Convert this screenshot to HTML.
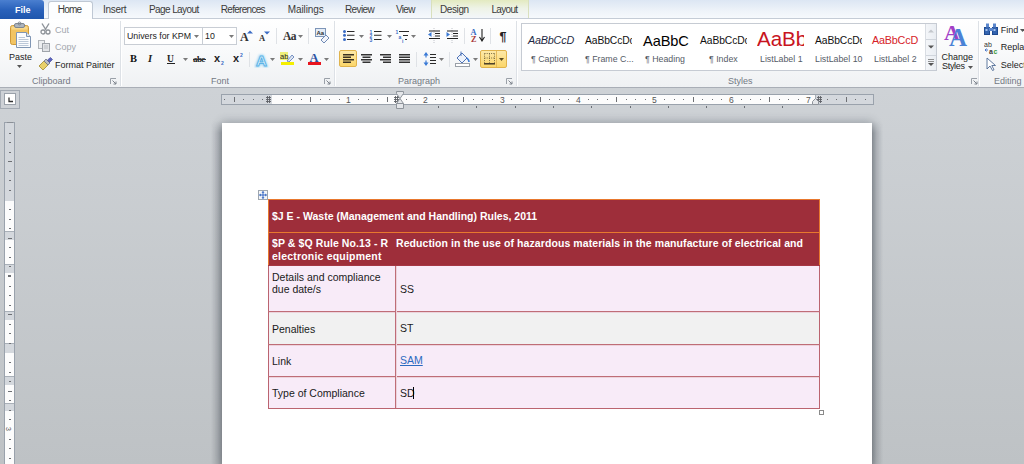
<!DOCTYPE html>
<html><head><meta charset="utf-8"><style>
*{box-sizing:border-box}
html,body{margin:0;padding:0}
body{width:1024px;height:464px;overflow:hidden;position:relative;background:linear-gradient(#ced2d6 0px,#ced2d6 88px,#bec2c5 464px);font-family:"Liberation Sans",sans-serif;color:#222}
.a{position:absolute}
.t{position:absolute;white-space:nowrap}
</style></head><body>
<div class="a" style="left:0px;top:0px;width:1024px;height:19px;background:linear-gradient(#dce6f3,#eef3f9 60%,#f6f9fc);border-bottom:1px solid #c5ccd6"></div>
<div class="a" style="left:431px;top:0px;width:98px;height:18px;background:linear-gradient(#e3eac0,#eef3e6 45%,#f3f6fa);border-left:1px solid #d9e0bd;border-right:1px solid #d9e0bd"></div>
<div class="a" style="left:0px;top:0px;width:44px;height:19px;background:linear-gradient(#4a7fd0,#2a62bb 50%,#1f56ad);border-radius:0 3px 0 0"></div>
<div class="t" style="left:15px;top:5.78px;font-size:9px;line-height:9px;color:#fff;font-weight:bold;font-style:normal;font-family:'Liberation Sans',sans-serif;">File</div>
<div class="a" style="left:48px;top:1px;width:45px;height:19px;background:#fdfeff;border:1px solid #bfc8d4;border-bottom:none;border-radius:3px 3px 0 0"></div>
<div class="t" style="left:57.75px;top:4.94px;font-size:10px;line-height:10px;color:#3b3b3b;font-weight:normal;font-style:normal;font-family:'Liberation Sans',sans-serif;letter-spacing:-0.8px">Home</div>
<div class="t" style="left:103px;top:4.94px;font-size:10px;line-height:10px;color:#3b3b3b;font-weight:normal;font-style:normal;font-family:'Liberation Sans',sans-serif;letter-spacing:-0.3px">Insert</div>
<div class="t" style="left:149px;top:4.94px;font-size:10px;line-height:10px;color:#3b3b3b;font-weight:normal;font-style:normal;font-family:'Liberation Sans',sans-serif;letter-spacing:-0.6px">Page Layout</div>
<div class="t" style="left:220.75px;top:4.94px;font-size:10px;line-height:10px;color:#3b3b3b;font-weight:normal;font-style:normal;font-family:'Liberation Sans',sans-serif;letter-spacing:-0.7px">References</div>
<div class="t" style="left:287.75px;top:4.94px;font-size:10px;line-height:10px;color:#3b3b3b;font-weight:normal;font-style:normal;font-family:'Liberation Sans',sans-serif;letter-spacing:-0.1px">Mailings</div>
<div class="t" style="left:345px;top:4.94px;font-size:10px;line-height:10px;color:#3b3b3b;font-weight:normal;font-style:normal;font-family:'Liberation Sans',sans-serif;letter-spacing:-0.6px">Review</div>
<div class="t" style="left:396px;top:4.94px;font-size:10px;line-height:10px;color:#3b3b3b;font-weight:normal;font-style:normal;font-family:'Liberation Sans',sans-serif;letter-spacing:-0.7px">View</div>
<div class="t" style="left:440px;top:4.94px;font-size:10px;line-height:10px;color:#3b3b3b;font-weight:normal;font-style:normal;font-family:'Liberation Sans',sans-serif;letter-spacing:-0.4px">Design</div>
<div class="t" style="left:491.5px;top:4.94px;font-size:10px;line-height:10px;color:#3b3b3b;font-weight:normal;font-style:normal;font-family:'Liberation Sans',sans-serif;letter-spacing:-0.7px">Layout</div>
<div class="a" style="left:0px;top:19px;width:1024px;height:69px;background:linear-gradient(#ffffff,#f9fafb 45%,#eff1f3);border-bottom:1px solid #a9aeb6"></div>
<div class="a" style="left:120px;top:21px;width:1px;height:65px;background:#dde1e6"></div>
<div class="a" style="left:121px;top:21px;width:1px;height:65px;background:#ffffff"></div>
<div class="a" style="left:334px;top:21px;width:1px;height:65px;background:#dde1e6"></div>
<div class="a" style="left:335px;top:21px;width:1px;height:65px;background:#ffffff"></div>
<div class="a" style="left:516px;top:21px;width:1px;height:65px;background:#dde1e6"></div>
<div class="a" style="left:517px;top:21px;width:1px;height:65px;background:#ffffff"></div>
<div class="a" style="left:978px;top:21px;width:1px;height:65px;background:#dde1e6"></div>
<div class="a" style="left:979px;top:21px;width:1px;height:65px;background:#ffffff"></div>
<div class="t" style="left:32px;top:76.98px;font-size:9px;line-height:9px;color:#737983;font-weight:normal;font-style:normal;font-family:'Liberation Sans',sans-serif;">Clipboard</div>
<div class="t" style="left:211px;top:76.98px;font-size:9px;line-height:9px;color:#737983;font-weight:normal;font-style:normal;font-family:'Liberation Sans',sans-serif;">Font</div>
<div class="t" style="left:398px;top:76.98px;font-size:9px;line-height:9px;color:#737983;font-weight:normal;font-style:normal;font-family:'Liberation Sans',sans-serif;">Paragraph</div>
<div class="t" style="left:728px;top:76.98px;font-size:9px;line-height:9px;color:#737983;font-weight:normal;font-style:normal;font-family:'Liberation Sans',sans-serif;">Styles</div>
<div class="t" style="left:994px;top:76.98px;font-size:9px;line-height:9px;color:#737983;font-weight:normal;font-style:normal;font-family:'Liberation Sans',sans-serif;">Editing</div>
<svg class="a" style="left:110px;top:78px" width="7" height="7" viewBox="0 0 7 7"><path d="M0.5 6V0.5H6" stroke="#9aa0a8" fill="none"/><path d="M2.5 2.5L6 6M6 3.5V6H3.5" stroke="#7d838c" fill="none"/></svg>
<svg class="a" style="left:324px;top:78px" width="7" height="7" viewBox="0 0 7 7"><path d="M0.5 6V0.5H6" stroke="#9aa0a8" fill="none"/><path d="M2.5 2.5L6 6M6 3.5V6H3.5" stroke="#7d838c" fill="none"/></svg>
<svg class="a" style="left:506px;top:78px" width="7" height="7" viewBox="0 0 7 7"><path d="M0.5 6V0.5H6" stroke="#9aa0a8" fill="none"/><path d="M2.5 2.5L6 6M6 3.5V6H3.5" stroke="#7d838c" fill="none"/></svg>
<svg class="a" style="left:971px;top:78px" width="7" height="7" viewBox="0 0 7 7"><path d="M0.5 6V0.5H6" stroke="#9aa0a8" fill="none"/><path d="M2.5 2.5L6 6M6 3.5V6H3.5" stroke="#7d838c" fill="none"/></svg>
<svg class="a" style="left:8px;top:21px" width="26" height="28" viewBox="0 0 26 28">
<rect x="2.5" y="4.5" width="18" height="19" rx="2" fill="#f2c463" stroke="#cf9a3a"/>
<rect x="3.5" y="5.5" width="16" height="3" fill="#f8d88a"/>
<rect x="6.5" y="2.5" width="10" height="4" rx="1.5" fill="#aeb5bd" stroke="#7f8790"/>
<circle cx="11.5" cy="2.5" r="1.5" fill="none" stroke="#7f8790"/>
<path d="M8.5 11.5H18.5L22.5 15.5V26.5H8.5Z" fill="#fbfcfe" stroke="#8096b4"/>
<path d="M18.5 11.5V15.5H22.5" fill="#dfe6f0" stroke="#8096b4"/>
<path d="M10.5 16.5H17M10.5 18.5H20.5M10.5 20.5H20.5M10.5 22.5H20.5M10.5 24.5H20.5" stroke="#bcc8d8"/>
</svg>
<div class="t" style="left:9px;top:52.68px;font-size:9px;line-height:9px;color:#232323;font-weight:normal;font-style:normal;font-family:'Liberation Sans',sans-serif;">Paste</div>
<svg class="a" style="left:17px;top:65px" width="5" height="3" viewBox="0 0 5 3"><path d="M0 0H5L2.5 3Z" fill="#555"/></svg>
<svg class="a" style="left:40px;top:23px" width="11" height="12" viewBox="0 0 11 12">
<path d="M2 0.5L6 7M9 0.5L5 7" stroke="#8e9399" stroke-width="1.4" fill="none"/>
<circle cx="3" cy="9" r="2" fill="none" stroke="#8e9399" stroke-width="1.3"/>
<circle cx="8" cy="9" r="2" fill="none" stroke="#8e9399" stroke-width="1.3"/>
</svg>
<div class="t" style="left:55px;top:25.68px;font-size:9px;line-height:9px;color:#a2a6ad;font-weight:normal;font-style:normal;font-family:'Liberation Sans',sans-serif;">Cut</div>
<svg class="a" style="left:38px;top:40px" width="12" height="12" viewBox="0 0 12 12">
<rect x="0.5" y="0.5" width="6" height="8" fill="#eceef0" stroke="#b0b4b9"/>
<rect x="4.5" y="3.5" width="7" height="8" fill="#e2e4e7" stroke="#9fa4aa"/>
<path d="M6 6H10M6 8H10" stroke="#b8bcc1"/>
</svg>
<div class="t" style="left:55px;top:42.78px;font-size:9px;line-height:9px;color:#a2a6ad;font-weight:normal;font-style:normal;font-family:'Liberation Sans',sans-serif;">Copy</div>
<svg class="a" style="left:38px;top:57px" width="15" height="14" viewBox="0 0 15 14">
<path d="M1 9L6 4L10 8L5 13Z" fill="#e8d06a" stroke="#a08a30" stroke-width="0.8"/>
<path d="M6 4L8 2L12 6L10 8Z" fill="#b9bcc2" stroke="#707680" stroke-width="0.8"/>
<path d="M9.5 3L12.5 0.5L14.5 2.5L11.5 5.5Z" fill="#5a62c0" stroke="#3a3f90" stroke-width="0.6"/>
</svg>
<div class="t" style="left:55px;top:60.78px;font-size:9px;line-height:9px;color:#232323;font-weight:normal;font-style:normal;font-family:'Liberation Sans',sans-serif;">Format Painter</div>
<div class="a" style="left:124px;top:27px;width:79px;height:18px;background:#fff;border:1px solid #c8cdd4"></div>
<div class="a" style="left:202px;top:27px;width:35px;height:18px;background:#fff;border:1px solid #c8cdd4"></div>
<div class="t" style="left:127px;top:31.65px;font-size:8.8px;line-height:8.8px;color:#232323;font-weight:normal;font-style:normal;font-family:'Liberation Sans',sans-serif;">Univers for KPM</div>
<svg class="a" style="left:194px;top:35px" width="5" height="3" viewBox="0 0 5 3"><path d="M0 0H5L2.5 3Z" fill="#7a7a7a"/></svg>
<div class="t" style="left:205px;top:31.65px;font-size:8.8px;line-height:8.8px;color:#232323;font-weight:normal;font-style:normal;font-family:'Liberation Sans',sans-serif;">10</div>
<svg class="a" style="left:229px;top:35px" width="5" height="3" viewBox="0 0 5 3"><path d="M0 0H5L2.5 3Z" fill="#7a7a7a"/></svg>
<div class="t" style="left:240px;top:30.84px;font-size:12px;line-height:12px;color:#333;font-weight:bold;font-style:normal;font-family:'Liberation Serif',serif;">A</div>
<svg class="a" style="left:247px;top:30px" width="6" height="4" viewBox="0 0 6 4"><path d="M0 3.5L3 0.5L6 3.5Z" fill="#3a6bc4"/></svg>
<div class="t" style="left:259px;top:34.40px;font-size:8.5px;line-height:8.5px;color:#333;font-weight:bold;font-style:normal;font-family:'Liberation Serif',serif;">A</div>
<svg class="a" style="left:264px;top:31px" width="6" height="4" viewBox="0 0 6 4"><path d="M0 0.5H6L3 3.5Z" fill="#3a6bc4"/></svg>
<div class="a" style="left:276px;top:28px;width:1px;height:16px;background:#dfe2e6"></div>
<div class="t" style="left:283px;top:30.57px;font-size:11.5px;line-height:11.5px;color:#333;font-weight:bold;font-style:normal;font-family:'Liberation Serif',serif;letter-spacing:-0.5px">Aa</div>
<svg class="a" style="left:298px;top:35px" width="5" height="3" viewBox="0 0 5 3"><path d="M0 0H5L2.5 3Z" fill="#7a7a7a"/></svg>
<div class="a" style="left:308px;top:28px;width:1px;height:16px;background:#dfe2e6"></div>
<svg class="a" style="left:315px;top:28px" width="15" height="15" viewBox="0 0 15 15">
<rect x="0.5" y="0.5" width="10" height="8" fill="#e4ecf6" stroke="#7d95b8"/>
<text x="1.5" y="7" font-size="6" font-family="Liberation Sans" font-weight="bold" fill="#333">Aa</text>
<path d="M6 12L11 7L14 10L9 15Z" fill="#f2f4fa" stroke="#6f8ab5"/>
</svg>
<div class="t" style="left:130px;top:53.61px;font-size:10.5px;line-height:10.5px;color:#111;font-weight:bold;font-style:normal;font-family:'Liberation Serif',serif;">B</div>
<div class="t" style="left:148px;top:53.61px;font-size:10.5px;line-height:10.5px;color:#222;font-weight:normal;font-style:italic;font-family:'Liberation Serif',serif;font-weight:bold">I</div>
<div class="t" style="left:167px;top:54.56px;font-size:9.5px;line-height:9.5px;color:#222;font-weight:bold;font-style:normal;font-family:'Liberation Serif',serif;">U</div>
<div class="a" style="left:167px;top:63px;width:8px;height:1px;background:#222"></div>
<svg class="a" style="left:183px;top:58px" width="5" height="3" viewBox="0 0 5 3"><path d="M0 0H5L2.5 3Z" fill="#7a7a7a"/></svg>
<div class="t" style="left:193px;top:54.98px;font-size:9px;line-height:9px;color:#232323;font-weight:bold;font-style:normal;font-family:'Liberation Serif',serif;letter-spacing:-0.6px">abe</div>
<div class="a" style="left:193px;top:59px;width:13px;height:1px;background:#333"></div>
<div class="t" style="left:214px;top:53.19px;font-size:11px;line-height:11px;color:#222;font-weight:bold;font-style:normal;font-family:'Liberation Sans',sans-serif;">x</div>
<div class="t" style="left:221px;top:60.87px;font-size:5px;line-height:5px;color:#3a6bc4;font-weight:bold;font-style:normal;font-family:'Liberation Sans',sans-serif;">2</div>
<div class="t" style="left:233px;top:53.19px;font-size:11px;line-height:11px;color:#222;font-weight:bold;font-style:normal;font-family:'Liberation Sans',sans-serif;">x</div>
<div class="t" style="left:240px;top:53.37px;font-size:5px;line-height:5px;color:#3a6bc4;font-weight:bold;font-style:normal;font-family:'Liberation Sans',sans-serif;">2</div>
<div class="a" style="left:249px;top:52px;width:1px;height:15px;background:#dfe2e6"></div>
<svg class="a" style="left:254px;top:51px" width="17" height="17" viewBox="0 0 17 17">
<defs><filter id="gl" x="-30%" y="-30%" width="160%" height="160%"><feGaussianBlur stdDeviation="0.9"/></filter></defs>
<text x="2" y="14.5" font-size="15" font-family="Liberation Sans" font-weight="bold" fill="none" stroke="#9fd8f6" stroke-width="2.5" filter="url(#gl)">A</text>
<text x="2" y="14.5" font-size="15" font-family="Liberation Sans" font-weight="bold" fill="#eaf6fd" stroke="#5db3e6" stroke-width="1">A</text>
</svg>
<svg class="a" style="left:270px;top:58px" width="5" height="3" viewBox="0 0 5 3"><path d="M0 0H5L2.5 3Z" fill="#7a7a7a"/></svg>
<svg class="a" style="left:280px;top:52px" width="15" height="14" viewBox="0 0 15 14">
<rect x="0" y="0" width="8" height="8" fill="#eef07a"/>
<text x="0" y="7" font-size="7.5" font-family="Liberation Sans" fill="#222">ab</text>
<path d="M7 9L12 3L14 5L9 10Z" fill="#dfe6f2" stroke="#5778b5" stroke-width="0.8"/>
<rect x="1" y="10" width="13" height="3" fill="#f5ef00"/>
</svg>
<svg class="a" style="left:298px;top:58px" width="5" height="3" viewBox="0 0 5 3"><path d="M0 0H5L2.5 3Z" fill="#7a7a7a"/></svg>
<div class="t" style="left:309.5px;top:51.72px;font-size:12.5px;line-height:12.5px;color:#2b52a3;font-weight:bold;font-style:normal;font-family:'Liberation Serif',serif;">A</div>
<div class="a" style="left:308px;top:62px;width:13px;height:3px;background:#e8141e"></div>
<svg class="a" style="left:324px;top:58px" width="5" height="3" viewBox="0 0 5 3"><path d="M0 0H5L2.5 3Z" fill="#7a7a7a"/></svg>
<svg class="a" style="left:342px;top:29px" width="14" height="14" viewBox="0 0 14 14">
<circle cx="2.5" cy="2.5" r="1.5" fill="#3a6bc4"/><circle cx="2.5" cy="6.3" r="1.5" fill="#3a6bc4"/><circle cx="2.5" cy="10.5" r="1.5" fill="#3a6bc4"/>
<path d="M5 2.5H12.5M5 6.3H12.5M5 10.5H12.5" stroke="#2a2a2a" stroke-width="1.1"/>
</svg>
<svg class="a" style="left:359px;top:35px" width="5" height="3" viewBox="0 0 5 3"><path d="M0 0H5L2.5 3Z" fill="#7a7a7a"/></svg>
<svg class="a" style="left:369px;top:29px" width="14" height="14" viewBox="0 0 14 14">
<text x="0.5" y="5" font-size="5" font-family="Liberation Sans" font-weight="bold" fill="#3a6bc4">1</text>
<text x="0.5" y="9" font-size="5" font-family="Liberation Sans" font-weight="bold" fill="#3a6bc4">2</text>
<text x="0.5" y="13" font-size="5" font-family="Liberation Sans" font-weight="bold" fill="#3a6bc4">3</text>
<path d="M5 2.5H12.5M5 6.3H12.5M5 10.5H12.5" stroke="#2a2a2a" stroke-width="1.1"/>
</svg>
<svg class="a" style="left:387px;top:35px" width="5" height="3" viewBox="0 0 5 3"><path d="M0 0H5L2.5 3Z" fill="#7a7a7a"/></svg>
<svg class="a" style="left:395px;top:29px" width="16" height="14" viewBox="0 0 16 14">
<text x="0.5" y="5" font-size="5" font-family="Liberation Sans" font-weight="bold" fill="#3a6bc4">1</text>
<text x="3.5" y="9.5" font-size="5" font-family="Liberation Sans" font-weight="bold" fill="#3a6bc4">a</text>
<text x="7" y="13.5" font-size="5" font-family="Liberation Sans" font-weight="bold" fill="#3a6bc4">i</text>
<path d="M4 2.5H14M8 6.5H13M10 10.5H12" stroke="#2a2a2a" stroke-width="1.1"/>
</svg>
<svg class="a" style="left:411px;top:35px" width="5" height="3" viewBox="0 0 5 3"><path d="M0 0H5L2.5 3Z" fill="#7a7a7a"/></svg>
<svg class="a" style="left:427px;top:28px" width="15" height="15" viewBox="0 0 15 15">
<path d="M7 0V15" stroke="#9aa0a8" stroke-width="0.6" stroke-dasharray="1 1"/>
<path d="M2 3H13M8 5.5H13M8 8H13M2 10.5H13" stroke="#222" stroke-width="1.2"/>
<path d="M1 6.5L4.5 4V9Z" fill="#3a7ad6"/>
</svg>
<svg class="a" style="left:445px;top:28px" width="15" height="15" viewBox="0 0 15 15">
<path d="M7 0V15" stroke="#9aa0a8" stroke-width="0.6" stroke-dasharray="1 1"/>
<path d="M2 3H13M8 5.5H13M8 8H13M2 10.5H13" stroke="#222" stroke-width="1.2"/>
<path d="M5 6.5L1.5 4V9Z" fill="#3a7ad6"/>
</svg>
<div class="a" style="left:464px;top:28px;width:1px;height:16px;background:#dfe2e6"></div>
<div class="t" style="left:470.5px;top:28.87px;font-size:8.3px;line-height:8.3px;color:#3a6bc4;font-weight:bold;font-style:normal;font-family:'Liberation Serif',serif;">A</div>
<div class="t" style="left:471px;top:35.87px;font-size:8.3px;line-height:8.3px;color:#a83838;font-weight:bold;font-style:normal;font-family:'Liberation Serif',serif;">Z</div>
<svg class="a" style="left:479px;top:29px" width="6" height="13" viewBox="0 0 6 13"><path d="M3 0V11M0.5 8L3 12L5.5 8" stroke="#222" stroke-width="1.1" fill="none"/></svg>
<div class="a" style="left:490px;top:28px;width:1px;height:16px;background:#dfe2e6"></div>
<div class="t" style="left:499.5px;top:30.92px;font-size:12.5px;line-height:12.5px;color:#222;font-weight:normal;font-style:normal;font-family:'Liberation Sans',sans-serif;font-weight:bold">&para;</div>
<div class="a" style="left:339px;top:50px;width:18px;height:17px;background:linear-gradient(#fde9a8,#fbd66a);border:1px solid #e0b34c;border-radius:2px"></div>
<svg class="a" style="left:343px;top:54px" width="12" height="10" viewBox="0 0 12 10"><path d="M0 0.75H11M0 3.25H8M0 5.75H11M0 8.25H8" stroke="#3b3222" stroke-width="1.3"/></svg>
<svg class="a" style="left:361px;top:54px" width="12" height="10" viewBox="0 0 12 10"><path d="M0 0.75H11M1.5 3.25H9.5M0 5.75H11M1.5 8.25H9.5" stroke="#333" stroke-width="1.3"/></svg>
<svg class="a" style="left:380px;top:54px" width="12" height="10" viewBox="0 0 12 10"><path d="M0 0.75H11M3 3.25H11M0 5.75H11M3 8.25H11" stroke="#333" stroke-width="1.3"/></svg>
<svg class="a" style="left:399px;top:54px" width="12" height="10" viewBox="0 0 12 10"><path d="M0 0.75H11M0 3.25H11M0 5.75H11M0 8.25H11" stroke="#333" stroke-width="1.3"/></svg>
<div class="a" style="left:416px;top:52px;width:1px;height:15px;background:#dfe2e6"></div>
<svg class="a" style="left:423px;top:52px" width="15" height="14" viewBox="0 0 15 14">
<path d="M3 1.5V5.5M3 8.5V12.5" stroke="#3a7ad6" stroke-width="1.2"/>
<path d="M0.5 3.5L3 0L5.5 3.5ZM0.5 10.5L3 14L5.5 10.5Z" fill="#3a7ad6"/>
<path d="M7 2.5H13M7 5.5H13M7 8.5H13M7 11.5H13" stroke="#2a2a2a" stroke-width="1.1"/>
</svg>
<svg class="a" style="left:439px;top:58px" width="5" height="3" viewBox="0 0 5 3"><path d="M0 0H5L2.5 3Z" fill="#7a7a7a"/></svg>
<div class="a" style="left:449px;top:52px;width:1px;height:15px;background:#dfe2e6"></div>
<svg class="a" style="left:455px;top:51px" width="16" height="16" viewBox="0 0 16 16">
<path d="M2 7L7 2L12 7L7 12Z" fill="#eef3fb" stroke="#4f74b8"/>
<path d="M12 7Q14 9 14 11" stroke="#3a7ad6" stroke-width="1.6" fill="none"/>
<path d="M6 0.5V5" stroke="#4f74b8"/>
<rect x="0.5" y="12.5" width="14" height="3" fill="#fff" stroke="#9aa0a8"/>
</svg>
<svg class="a" style="left:473px;top:58px" width="5" height="3" viewBox="0 0 5 3"><path d="M0 0H5L2.5 3Z" fill="#7a7a7a"/></svg>
<div class="a" style="left:480px;top:50px;width:27px;height:18px;background:linear-gradient(#fde9a8,#fbd66a);border:1px solid #e0b34c;border-radius:2px"></div>
<div class="a" style="left:496px;top:51px;width:1px;height:16px;background:#e6bb5a"></div>
<svg class="a" style="left:484px;top:53px" width="11" height="12" viewBox="0 0 11 12">
<path d="M0.5 0.5H10.5M0.5 5H10.5M0.5 0.5V10M5.5 0.5V10M10.5 0.5V10" stroke="#5e5030" stroke-width="0.8" stroke-dasharray="1 1.2" fill="none"/>
<path d="M0 10.8H11" stroke="#3b3222" stroke-width="1.4"/>
</svg>
<svg class="a" style="left:499px;top:58px" width="5" height="3" viewBox="0 0 5 3"><path d="M0 0H5L2.5 3Z" fill="#5b4a20"/></svg>
<div class="a" style="left:521px;top:23px;width:416px;height:48px;background:#fff;border:1px solid #c6cbd3"></div>
<div class="a" style="left:925px;top:24px;width:11px;height:46px;background:linear-gradient(90deg,#f4f6f9,#e9edf2);border-left:1px solid #d9dde3"></div>
<div class="a" style="left:926px;top:39px;width:10px;height:1px;background:#d0d5dc"></div>
<div class="a" style="left:926px;top:55px;width:10px;height:1px;background:#d0d5dc"></div>
<svg class="a" style="left:928px;top:29px" width="6" height="4" viewBox="0 0 6 4"><path d="M0 3.5L3 0.5L6 3.5Z" fill="#c3c7cc"/></svg>
<svg class="a" style="left:928px;top:45px" width="6" height="4" viewBox="0 0 6 4"><path d="M0 0.5H6L3 3.5Z" fill="#555"/></svg>
<svg class="a" style="left:928px;top:59px" width="6" height="7" viewBox="0 0 6 7"><path d="M0 0.5H6M0 2.5H6" stroke="#777" stroke-width="0.8"/><path d="M0 4H6L3 7Z" fill="#555"/></svg>
<div class="t" style="left:528px;top:34.96px;font-size:10.8px;line-height:10.8px;color:#1f2b45;font-weight:normal;font-style:italic;font-family:'Liberation Sans',sans-serif;letter-spacing:-0.2px">AaBbCcD</div>
<div class="a" style="left:0;top:0;width:632px;height:60px;overflow:hidden">
<div class="t" style="left:585px;top:35.98px;font-size:10.3px;line-height:10.3px;color:#111;font-weight:normal;font-style:normal;font-family:'Liberation Sans',sans-serif;letter-spacing:-0.1px">AaBbCcDc</div>
</div>
<div class="t" style="left:643px;top:33.64px;font-size:14.6px;line-height:14.6px;color:#000;font-weight:normal;font-style:normal;font-family:'Liberation Sans',sans-serif;letter-spacing:-0.1px">AaBbC</div>
<div class="a" style="left:0;top:0;width:747px;height:60px;overflow:hidden">
<div class="t" style="left:700px;top:35.98px;font-size:10.3px;line-height:10.3px;color:#111;font-weight:normal;font-style:normal;font-family:'Liberation Sans',sans-serif;letter-spacing:-0.1px">AaBbCcDc</div>
</div>
<div class="a" style="left:757px;top:24px;width:47px;height:30px;overflow:hidden">
<div class="t" style="left:0px;top:5.4px;font-size:20.5px;line-height:20.5px;color:#c8141e">AaBb</div></div>
<div class="a" style="left:0;top:0;width:862px;height:60px;overflow:hidden">
<div class="t" style="left:815px;top:35.98px;font-size:10.3px;line-height:10.3px;color:#111;font-weight:normal;font-style:normal;font-family:'Liberation Sans',sans-serif;letter-spacing:-0.1px">AaBbCcDc</div>
</div>
<div class="t" style="left:872px;top:34.96px;font-size:10.8px;line-height:10.8px;color:#d62128;font-weight:normal;font-style:normal;font-family:'Liberation Sans',sans-serif;letter-spacing:-0.2px">AaBbCcD</div>
<div class="t" style="left:531px;top:55.05px;font-size:8.8px;line-height:8.8px;color:#555b66;font-weight:normal;font-style:normal;font-family:'Liberation Sans',sans-serif;">&para; Caption</div>
<div class="t" style="left:585px;top:55.05px;font-size:8.8px;line-height:8.8px;color:#555b66;font-weight:normal;font-style:normal;font-family:'Liberation Sans',sans-serif;">&para; Frame C...</div>
<div class="t" style="left:645px;top:55.05px;font-size:8.8px;line-height:8.8px;color:#555b66;font-weight:normal;font-style:normal;font-family:'Liberation Sans',sans-serif;">&para; Heading</div>
<div class="t" style="left:709px;top:55.05px;font-size:8.8px;line-height:8.8px;color:#555b66;font-weight:normal;font-style:normal;font-family:'Liberation Sans',sans-serif;">&para; Index</div>
<div class="t" style="left:760px;top:55.05px;font-size:8.8px;line-height:8.8px;color:#555b66;font-weight:normal;font-style:normal;font-family:'Liberation Sans',sans-serif;">ListLabel 1</div>
<div class="t" style="left:815px;top:55.05px;font-size:8.8px;line-height:8.8px;color:#555b66;font-weight:normal;font-style:normal;font-family:'Liberation Sans',sans-serif;">ListLabel 10</div>
<div class="t" style="left:874px;top:55.05px;font-size:8.8px;line-height:8.8px;color:#555b66;font-weight:normal;font-style:normal;font-family:'Liberation Sans',sans-serif;">ListLabel 2</div>
<svg class="a" style="left:941px;top:21px" width="32" height="27" viewBox="0 0 32 27">
<text x="3" y="19" font-size="22" font-family="Liberation Serif" font-weight="bold" fill="#a23fc6">A</text>
<text x="8" y="25" font-size="25" font-family="Liberation Serif" font-weight="bold" fill="#4a82d6">A</text>
</svg>
<div class="t" style="left:941.5px;top:52.98px;font-size:9px;line-height:9px;color:#232323;font-weight:normal;font-style:normal;font-family:'Liberation Sans',sans-serif;">Change</div>
<div class="t" style="left:942px;top:62.48px;font-size:9px;line-height:9px;color:#232323;font-weight:normal;font-style:normal;font-family:'Liberation Sans',sans-serif;letter-spacing:-0.3px">Styles</div>
<svg class="a" style="left:968px;top:66px" width="5" height="3" viewBox="0 0 5 3"><path d="M0 0H5L2.5 3Z" fill="#555"/></svg>
<svg class="a" style="left:984px;top:23px" width="14" height="12" viewBox="0 0 14 12">
<rect x="0.5" y="4.5" width="5" height="7" fill="#3464b0" stroke="#1f4a90"/>
<rect x="8.5" y="4.5" width="5" height="7" fill="#3464b0" stroke="#1f4a90"/>
<rect x="2" y="0.5" width="3" height="4" fill="#5a86cc"/>
<rect x="9" y="0.5" width="3" height="4" fill="#5a86cc"/>
<rect x="5" y="5" width="4" height="3" fill="#5a86cc"/>
<rect x="1.5" y="6" width="2" height="2" fill="#a8c4ee"/>
<rect x="9.5" y="6" width="2" height="2" fill="#a8c4ee"/>
</svg>
<div class="t" style="left:1000.7px;top:25.78px;font-size:9px;line-height:9px;color:#232323;font-weight:normal;font-style:normal;font-family:'Liberation Sans',sans-serif;">Find</div>
<svg class="a" style="left:1020px;top:29px" width="5" height="3" viewBox="0 0 5 3"><path d="M0 0H5L2.5 3Z" fill="#555"/></svg>
<svg class="a" style="left:984px;top:41px" width="16" height="13" viewBox="0 0 16 13">
<text x="0" y="6" font-size="7" font-family="Liberation Sans" fill="#333">ab</text>
<text x="5" y="12.5" font-size="7" font-family="Liberation Sans" font-weight="bold" fill="#333">a</text>
<text x="9.5" y="12.5" font-size="7" font-family="Liberation Sans" font-weight="bold" fill="#3a9a3a">c</text>
<path d="M4 9H1.5M2.5 7.5L1 9L2.5 10.5" stroke="#3a6bc4" fill="none" stroke-width="0.9"/>
</svg>
<div class="t" style="left:1000.7px;top:42.78px;font-size:9px;line-height:9px;color:#232323;font-weight:normal;font-style:normal;font-family:'Liberation Sans',sans-serif;">Replace</div>
<svg class="a" style="left:986px;top:57px" width="10" height="14" viewBox="0 0 10 14"><path d="M1 1V12L4 9L6.5 13.5L8 12.8L5.8 8.5H9.5Z" fill="#fff" stroke="#4f6b95" stroke-width="0.9"/></svg>
<div class="t" style="left:1000.7px;top:60.98px;font-size:9px;line-height:9px;color:#232323;font-weight:normal;font-style:normal;font-family:'Liberation Sans',sans-serif;">Select</div>
<div class="a" style="left:221px;top:94px;width:653px;height:11px;background:#d4d8dd;border:1px solid #9aa2ac"></div>
<div class="a" style="left:272px;top:95px;width:543px;height:9px;background:#fcfcfc"></div>
<div class="a" style="left:815px;top:95px;width:1px;height:9px;background:#a9b0b8"></div>
<div class="a" style="left:224px;top:99px;width:1px;height:1px;background:#6d6f73"></div>
<div class="a" style="left:234px;top:97px;width:1px;height:5px;background:#6d6f73"></div>
<div class="a" style="left:243px;top:99px;width:1px;height:1px;background:#6d6f73"></div>
<div class="a" style="left:253px;top:99px;width:1px;height:1px;background:#6d6f73"></div>
<div class="a" style="left:262px;top:99px;width:1px;height:1px;background:#6d6f73"></div>
<div class="a" style="left:282px;top:99px;width:1px;height:1px;background:#6d6f73"></div>
<div class="a" style="left:291px;top:99px;width:1px;height:1px;background:#6d6f73"></div>
<div class="a" style="left:301px;top:99px;width:1px;height:1px;background:#6d6f73"></div>
<div class="a" style="left:310px;top:97px;width:1px;height:5px;background:#6d6f73"></div>
<div class="a" style="left:320px;top:99px;width:1px;height:1px;background:#6d6f73"></div>
<div class="a" style="left:329px;top:99px;width:1px;height:1px;background:#6d6f73"></div>
<div class="a" style="left:339px;top:99px;width:1px;height:1px;background:#6d6f73"></div>
<div class="a" style="left:358px;top:99px;width:1px;height:1px;background:#6d6f73"></div>
<div class="a" style="left:368px;top:99px;width:1px;height:1px;background:#6d6f73"></div>
<div class="a" style="left:377px;top:99px;width:1px;height:1px;background:#6d6f73"></div>
<div class="a" style="left:387px;top:97px;width:1px;height:5px;background:#6d6f73"></div>
<div class="a" style="left:406px;top:99px;width:1px;height:1px;background:#6d6f73"></div>
<div class="a" style="left:415px;top:99px;width:1px;height:1px;background:#6d6f73"></div>
<div class="a" style="left:435px;top:99px;width:1px;height:1px;background:#6d6f73"></div>
<div class="a" style="left:444px;top:99px;width:1px;height:1px;background:#6d6f73"></div>
<div class="a" style="left:454px;top:99px;width:1px;height:1px;background:#6d6f73"></div>
<div class="a" style="left:463px;top:97px;width:1px;height:5px;background:#6d6f73"></div>
<div class="a" style="left:473px;top:99px;width:1px;height:1px;background:#6d6f73"></div>
<div class="a" style="left:482px;top:99px;width:1px;height:1px;background:#6d6f73"></div>
<div class="a" style="left:492px;top:99px;width:1px;height:1px;background:#6d6f73"></div>
<div class="a" style="left:511px;top:99px;width:1px;height:1px;background:#6d6f73"></div>
<div class="a" style="left:521px;top:99px;width:1px;height:1px;background:#6d6f73"></div>
<div class="a" style="left:530px;top:99px;width:1px;height:1px;background:#6d6f73"></div>
<div class="a" style="left:540px;top:97px;width:1px;height:5px;background:#6d6f73"></div>
<div class="a" style="left:549px;top:99px;width:1px;height:1px;background:#6d6f73"></div>
<div class="a" style="left:559px;top:99px;width:1px;height:1px;background:#6d6f73"></div>
<div class="a" style="left:568px;top:99px;width:1px;height:1px;background:#6d6f73"></div>
<div class="a" style="left:588px;top:99px;width:1px;height:1px;background:#6d6f73"></div>
<div class="a" style="left:597px;top:99px;width:1px;height:1px;background:#6d6f73"></div>
<div class="a" style="left:607px;top:99px;width:1px;height:1px;background:#6d6f73"></div>
<div class="a" style="left:616px;top:97px;width:1px;height:5px;background:#6d6f73"></div>
<div class="a" style="left:626px;top:99px;width:1px;height:1px;background:#6d6f73"></div>
<div class="a" style="left:635px;top:99px;width:1px;height:1px;background:#6d6f73"></div>
<div class="a" style="left:645px;top:99px;width:1px;height:1px;background:#6d6f73"></div>
<div class="a" style="left:664px;top:99px;width:1px;height:1px;background:#6d6f73"></div>
<div class="a" style="left:674px;top:99px;width:1px;height:1px;background:#6d6f73"></div>
<div class="a" style="left:683px;top:99px;width:1px;height:1px;background:#6d6f73"></div>
<div class="a" style="left:693px;top:97px;width:1px;height:5px;background:#6d6f73"></div>
<div class="a" style="left:702px;top:99px;width:1px;height:1px;background:#6d6f73"></div>
<div class="a" style="left:712px;top:99px;width:1px;height:1px;background:#6d6f73"></div>
<div class="a" style="left:721px;top:99px;width:1px;height:1px;background:#6d6f73"></div>
<div class="a" style="left:741px;top:99px;width:1px;height:1px;background:#6d6f73"></div>
<div class="a" style="left:750px;top:99px;width:1px;height:1px;background:#6d6f73"></div>
<div class="a" style="left:760px;top:99px;width:1px;height:1px;background:#6d6f73"></div>
<div class="a" style="left:769px;top:97px;width:1px;height:5px;background:#6d6f73"></div>
<div class="a" style="left:779px;top:99px;width:1px;height:1px;background:#6d6f73"></div>
<div class="a" style="left:788px;top:99px;width:1px;height:1px;background:#6d6f73"></div>
<div class="a" style="left:798px;top:99px;width:1px;height:1px;background:#6d6f73"></div>
<div class="a" style="left:827px;top:99px;width:1px;height:1px;background:#6d6f73"></div>
<div class="a" style="left:836px;top:99px;width:1px;height:1px;background:#6d6f73"></div>
<div class="a" style="left:846px;top:97px;width:1px;height:5px;background:#6d6f73"></div>
<div class="a" style="left:855px;top:99px;width:1px;height:1px;background:#6d6f73"></div>
<div class="a" style="left:865px;top:99px;width:1px;height:1px;background:#6d6f73"></div>
<div class="t" style="left:346px;top:95.90px;font-size:8.5px;line-height:8.5px;color:#555;font-weight:normal;font-style:normal;font-family:'Liberation Sans',sans-serif;">1</div>
<div class="t" style="left:423px;top:95.90px;font-size:8.5px;line-height:8.5px;color:#555;font-weight:normal;font-style:normal;font-family:'Liberation Sans',sans-serif;">2</div>
<div class="t" style="left:500px;top:95.90px;font-size:8.5px;line-height:8.5px;color:#555;font-weight:normal;font-style:normal;font-family:'Liberation Sans',sans-serif;">3</div>
<div class="t" style="left:576px;top:95.90px;font-size:8.5px;line-height:8.5px;color:#555;font-weight:normal;font-style:normal;font-family:'Liberation Sans',sans-serif;">4</div>
<div class="t" style="left:652px;top:95.90px;font-size:8.5px;line-height:8.5px;color:#555;font-weight:normal;font-style:normal;font-family:'Liberation Sans',sans-serif;">5</div>
<div class="t" style="left:729px;top:95.90px;font-size:8.5px;line-height:8.5px;color:#555;font-weight:normal;font-style:normal;font-family:'Liberation Sans',sans-serif;">6</div>
<div class="t" style="left:806px;top:95.90px;font-size:8.5px;line-height:8.5px;color:#555;font-weight:normal;font-style:normal;font-family:'Liberation Sans',sans-serif;">7</div>
<div class="a" style="left:438px;top:106px;width:1px;height:2px;background:#6a6e74"></div>
<div class="a" style="left:476px;top:106px;width:1px;height:2px;background:#6a6e74"></div>
<div class="a" style="left:515px;top:106px;width:1px;height:2px;background:#6a6e74"></div>
<div class="a" style="left:553px;top:106px;width:1px;height:2px;background:#6a6e74"></div>
<div class="a" style="left:591px;top:106px;width:1px;height:2px;background:#6a6e74"></div>
<div class="a" style="left:630px;top:106px;width:1px;height:2px;background:#6a6e74"></div>
<div class="a" style="left:668px;top:106px;width:1px;height:2px;background:#6a6e74"></div>
<div class="a" style="left:706px;top:106px;width:1px;height:2px;background:#6a6e74"></div>
<div class="a" style="left:744px;top:106px;width:1px;height:2px;background:#6a6e74"></div>
<div class="a" style="left:782px;top:106px;width:1px;height:2px;background:#6a6e74"></div>
<svg class="a" style="left:266px;top:96px" width="5" height="7" viewBox="0 0 5 7"><path d="M0 1.5H5M0 3.5H5M0 5.5H5M1.5 0V7M3.5 0V7" stroke="#5d6166" stroke-width="0.9"/></svg>
<svg class="a" style="left:394px;top:96px" width="5" height="7" viewBox="0 0 5 7"><path d="M0 1.5H5M0 3.5H5M0 5.5H5M1.5 0V7M3.5 0V7" stroke="#5d6166" stroke-width="0.9"/></svg>
<svg class="a" style="left:817px;top:96px" width="5" height="7" viewBox="0 0 5 7"><path d="M0 1.5H5M0 3.5H5M0 5.5H5M1.5 0V7M3.5 0V7" stroke="#5d6166" stroke-width="0.9"/></svg>
<svg class="a" style="left:396px;top:91px" width="8" height="19" viewBox="0 0 8 19">
<path d="M0.5 0.5H7.5V2.5L4 7.5L0.5 2.5Z" fill="#e4e6e9" stroke="#8e949b"/>
<path d="M4 7.5L7.5 12.5V17.5H0.5V12.5Z" fill="#e4e6e9" stroke="#8e949b"/>
<path d="M0.5 12.5H7.5" stroke="#8e949b"/>
</svg>
<svg class="a" style="left:812px;top:98px" width="7" height="7" viewBox="0 0 7 7"><path d="M0.5 6.5V3.5L3.5 0.5L6.5 3.5V6.5Z" fill="#e4e6e9" stroke="#8e949b"/></svg>
<div class="a" style="left:0px;top:90px;width:20px;height:19px;background:#cdd1d6;border:1px solid #a3aab3"></div>
<div class="a" style="left:4px;top:93px;width:12px;height:12px;background:#fff;border:1px solid #9aa1aa"></div>
<svg class="a" style="left:8px;top:97px" width="6" height="6" viewBox="0 0 6 6"><path d="M1 0.5V4.5H5" stroke="#333" stroke-width="1.3" fill="none"/></svg>
<div class="a" style="left:4px;top:122px;width:11px;height:342px;background:#d4d8dd;border:1px solid #9aa2ac"></div>
<div class="a" style="left:5px;top:201px;width:9px;height:30px;background:#fcfcfc"></div>
<div class="a" style="left:5px;top:240px;width:9px;height:24px;background:#fcfcfc"></div>
<div class="a" style="left:5px;top:273px;width:9px;height:38px;background:#fcfcfc"></div>
<div class="a" style="left:5px;top:320px;width:9px;height:23px;background:#fcfcfc"></div>
<div class="a" style="left:5px;top:353px;width:9px;height:23px;background:#fcfcfc"></div>
<div class="a" style="left:5px;top:385px;width:9px;height:18px;background:#fcfcfc"></div>
<div class="a" style="left:5px;top:411px;width:9px;height:53px;background:#fcfcfc"></div>
<div class="a" style="left:5px;top:231px;width:9px;height:1px;background:#a9b0b8"></div>
<div class="a" style="left:5px;top:264px;width:9px;height:1px;background:#a9b0b8"></div>
<div class="a" style="left:5px;top:311px;width:9px;height:1px;background:#a9b0b8"></div>
<div class="a" style="left:5px;top:343px;width:9px;height:1px;background:#a9b0b8"></div>
<div class="a" style="left:5px;top:376px;width:9px;height:1px;background:#a9b0b8"></div>
<div class="a" style="left:5px;top:403px;width:9px;height:1px;background:#a9b0b8"></div>
<div class="a" style="left:9px;top:133px;width:2px;height:1px;background:#6d6f73"></div>
<div class="a" style="left:9px;top:142px;width:2px;height:1px;background:#6d6f73"></div>
<div class="a" style="left:9px;top:152px;width:2px;height:1px;background:#6d6f73"></div>
<div class="a" style="left:8px;top:161px;width:4px;height:1px;background:#6d6f73"></div>
<div class="a" style="left:9px;top:171px;width:2px;height:1px;background:#6d6f73"></div>
<div class="a" style="left:9px;top:180px;width:2px;height:1px;background:#6d6f73"></div>
<div class="a" style="left:9px;top:190px;width:2px;height:1px;background:#6d6f73"></div>
<div class="a" style="left:9px;top:209px;width:2px;height:1px;background:#6d6f73"></div>
<div class="a" style="left:9px;top:219px;width:2px;height:1px;background:#6d6f73"></div>
<div class="a" style="left:9px;top:228px;width:2px;height:1px;background:#6d6f73"></div>
<div class="a" style="left:8px;top:238px;width:4px;height:1px;background:#6d6f73"></div>
<div class="a" style="left:9px;top:247px;width:2px;height:1px;background:#6d6f73"></div>
<div class="a" style="left:9px;top:257px;width:2px;height:1px;background:#6d6f73"></div>
<div class="a" style="left:9px;top:266px;width:2px;height:1px;background:#6d6f73"></div>
<div class="a" style="left:9px;top:286px;width:2px;height:1px;background:#6d6f73"></div>
<div class="a" style="left:9px;top:295px;width:2px;height:1px;background:#6d6f73"></div>
<div class="a" style="left:9px;top:305px;width:2px;height:1px;background:#6d6f73"></div>
<div class="a" style="left:8px;top:314px;width:4px;height:1px;background:#6d6f73"></div>
<div class="a" style="left:9px;top:324px;width:2px;height:1px;background:#6d6f73"></div>
<div class="a" style="left:9px;top:333px;width:2px;height:1px;background:#6d6f73"></div>
<div class="a" style="left:9px;top:343px;width:2px;height:1px;background:#6d6f73"></div>
<div class="a" style="left:9px;top:362px;width:2px;height:1px;background:#6d6f73"></div>
<div class="a" style="left:9px;top:372px;width:2px;height:1px;background:#6d6f73"></div>
<div class="a" style="left:9px;top:381px;width:2px;height:1px;background:#6d6f73"></div>
<div class="a" style="left:8px;top:391px;width:4px;height:1px;background:#6d6f73"></div>
<div class="a" style="left:9px;top:400px;width:2px;height:1px;background:#6d6f73"></div>
<div class="a" style="left:9px;top:410px;width:2px;height:1px;background:#6d6f73"></div>
<div class="a" style="left:9px;top:419px;width:2px;height:1px;background:#6d6f73"></div>
<div class="a" style="left:9px;top:439px;width:2px;height:1px;background:#6d6f73"></div>
<div class="a" style="left:9px;top:448px;width:2px;height:1px;background:#6d6f73"></div>
<div class="a" style="left:9px;top:458px;width:2px;height:1px;background:#6d6f73"></div>
<div class="a" style="left:7px;top:122px;width:6px;height:1px;background:#8a8f96"></div>
<div class="a" style="left:8px;top:275px;width:3px;height:2px;background:#6d6f73"></div>
<div class="t" style="left:5px;top:425.67px;font-size:7px;line-height:7px;color:#555;font-weight:normal;font-style:normal;font-family:'Liberation Sans',sans-serif;transform:rotate(90deg);transform-origin:3px 4px">3</div>
<div class="a" style="left:222px;top:123px;width:650px;height:341px;background:#fff;box-shadow:0 0 9px 1px rgba(40,50,60,.33)"></div>
<div class="a" style="left:211px;top:121px;width:11px;height:343px;background:linear-gradient(90deg,rgba(70,76,84,0),rgba(70,76,84,.18) 60%,rgba(60,66,74,.32));-webkit-mask-image:linear-gradient(transparent,#000 12px)"></div>
<div class="a" style="left:872px;top:121px;width:11px;height:343px;background:linear-gradient(90deg,rgba(60,66,74,.34),rgba(70,76,84,.16) 40%,rgba(70,76,84,0));-webkit-mask-image:linear-gradient(transparent,#000 12px)"></div>
<svg class="a" style="left:258px;top:190px" width="10" height="10" viewBox="0 0 10 10">
<rect x="0.5" y="0.5" width="9" height="9" fill="#f4f6f8" stroke="#9ea6b0"/>
<path d="M5 1.5V8.5M1.5 5H8.5" stroke="#3a6bc4" stroke-width="1"/>
<path d="M5 1L3.5 2.8H6.5ZM5 9L3.5 7.2H6.5ZM1 5L2.8 3.5V6.5ZM9 5L7.2 3.5V6.5Z" fill="#3a6bc4"/>
</svg>
<div class="a" style="left:268px;top:199px;width:552px;height:67px;background:#9e2e3a;border:1px solid #e8782e"></div>
<div class="a" style="left:268px;top:232px;width:552px;height:1px;background:#e8782e"></div>
<div class="a" style="left:268px;top:265px;width:552px;height:144px;background:#f8ebf8;border:1px solid #bb6470;border-top:none"></div>
<div class="a" style="left:269px;top:312px;width:550px;height:32px;background:#f1f1f1"></div>
<div class="a" style="left:268px;top:265px;width:552px;height:1px;background:#a63744"></div>
<div class="a" style="left:268px;top:311px;width:552px;height:1px;background:#bf6d77"></div>
<div class="a" style="left:269px;top:312px;width:550px;height:1px;background:#ecd3dc"></div>
<div class="a" style="left:268px;top:344px;width:552px;height:1px;background:#bf6d77"></div>
<div class="a" style="left:269px;top:345px;width:550px;height:1px;background:#ecd3dc"></div>
<div class="a" style="left:268px;top:376px;width:552px;height:1px;background:#bf6d77"></div>
<div class="a" style="left:269px;top:377px;width:550px;height:1px;background:#ecd3dc"></div>
<div class="a" style="left:395px;top:266px;width:1px;height:142px;background:#bf6d77"></div>
<div class="a" style="left:396px;top:266px;width:1px;height:142px;background:#ecd3dc"></div>
<div class="a" style="left:819px;top:410px;width:5px;height:5px;border:1px solid #8a8a8a;background:#fff"></div>
<div class="t" style="left:272px;top:210.91px;font-size:10.5px;line-height:10.5px;color:#fff;font-weight:bold;font-style:normal;font-family:'Liberation Sans',sans-serif;">$J E - Waste (Management and Handling) Rules, 2011</div>
<div class="t" style="left:272px;top:237.51px;font-size:10.5px;line-height:10.5px;color:#fff;font-weight:bold;font-style:normal;font-family:'Liberation Sans',sans-serif;letter-spacing:0.09px">$P &amp; $Q Rule No.13 - R</div>
<div class="t" style="left:396px;top:237.51px;font-size:10.5px;line-height:10.5px;color:#fff;font-weight:bold;font-style:normal;font-family:'Liberation Sans',sans-serif;letter-spacing:0.085px">Reduction in the use of hazardous materials in the manufacture of electrical and</div>
<div class="t" style="left:272px;top:250.51px;font-size:10.5px;line-height:10.5px;color:#fff;font-weight:bold;font-style:normal;font-family:'Liberation Sans',sans-serif;letter-spacing:0.2px">electronic equipment</div>
<div class="t" style="left:272px;top:271.71px;font-size:10.5px;line-height:10.5px;color:#1a1a1a;font-weight:normal;font-style:normal;font-family:'Liberation Sans',sans-serif;">Details and compliance</div>
<div class="t" style="left:272px;top:284.31px;font-size:10.5px;line-height:10.5px;color:#1a1a1a;font-weight:normal;font-style:normal;font-family:'Liberation Sans',sans-serif;">due date/s</div>
<div class="t" style="left:400px;top:283.61px;font-size:10.5px;line-height:10.5px;color:#1a1a1a;font-weight:normal;font-style:normal;font-family:'Liberation Sans',sans-serif;">SS</div>
<div class="t" style="left:272px;top:323.61px;font-size:10.5px;line-height:10.5px;color:#1a1a1a;font-weight:normal;font-style:normal;font-family:'Liberation Sans',sans-serif;">Penalties</div>
<div class="t" style="left:400px;top:323.31px;font-size:10.5px;line-height:10.5px;color:#1a1a1a;font-weight:normal;font-style:normal;font-family:'Liberation Sans',sans-serif;">ST</div>
<div class="t" style="left:272px;top:355.81px;font-size:10.5px;line-height:10.5px;color:#1a1a1a;font-weight:normal;font-style:normal;font-family:'Liberation Sans',sans-serif;">Link</div>
<div class="t" style="left:400px;top:354.71px;font-size:10.5px;line-height:10.5px;color:#2a6ac0;font-weight:normal;font-style:normal;font-family:'Liberation Sans',sans-serif;text-decoration:underline">SAM</div>
<div class="t" style="left:272px;top:388.01px;font-size:10.5px;line-height:10.5px;color:#1a1a1a;font-weight:normal;font-style:normal;font-family:'Liberation Sans',sans-serif;">Type of Compliance</div>
<div class="t" style="left:400px;top:388.01px;font-size:10.5px;line-height:10.5px;color:#1a1a1a;font-weight:normal;font-style:normal;font-family:'Liberation Sans',sans-serif;">SD</div>
<div class="a" style="left:413px;top:387px;width:1px;height:12px;background:#000"></div>
</body></html>
